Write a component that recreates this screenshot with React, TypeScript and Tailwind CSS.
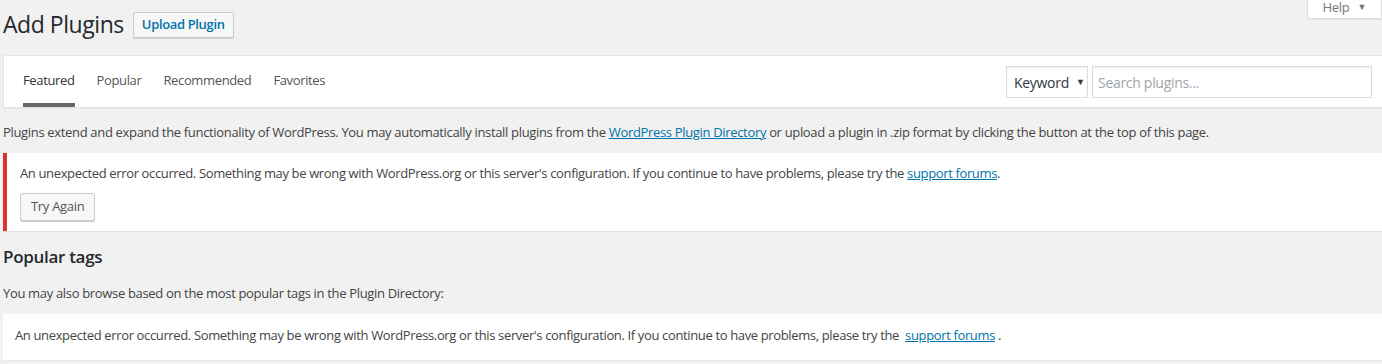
import React from "react";

const font = { fontFamily: '"Open Sans", "Noto Sans", sans-serif' };

export default function App() {
  return (
    <div className="min-h-[364px] w-[1382px] bg-[#f1f1f1] text-[#444] overflow-hidden" style={font}>
      <div className="relative">
        <div className="absolute right-0 top-0 flex h-[19px] w-[75px] items-start justify-center border border-t-0 border-[#ddd] bg-white shadow-[0_1px_1px_rgba(0,0,0,0.04)]">
          <span className="text-[13px] leading-[15px] tracking-[-0.3px] text-[#72777c]">Help</span>
          <span className="ml-[8px] text-[9px] leading-[14px] text-[#72777c]">▼</span>
        </div>
      </div>
      <div className="flex items-center gap-[9px] pl-[3px] pt-[10px]">
        <h1 className="text-[23px] leading-[29px] tracking-[-0.45px] text-[#23282d]">Add Plugins</h1>
        <button className="h-[26px] rounded-[2px] border border-[#ccc] bg-[#f7f7f7] px-[8px] text-[13px] font-semibold tracking-[-0.35px] text-[#0073aa] shadow-[0_1px_0_#ccc]">
          Upload Plugin
        </button>
      </div>
      <div className="ml-[3px] mt-[16px] flex h-[53px] items-stretch border border-r-0 border-[#e5e5e5] bg-white pl-[19px] pr-[10px] shadow-[0_1px_1px_rgba(0,0,0,0.04)]">
        <div className="flex items-stretch gap-[22px] text-[13px] tracking-[-0.36px]">
          <div className="flex flex-col justify-center border-b-4 border-[#666] pt-[2px] text-[#333]">Featured</div>
          <div className="flex flex-col justify-center pb-[2px] text-[#555]">Popular</div>
          <div className="flex flex-col justify-center pb-[2px] text-[#555]">Recommended</div>
          <div className="flex flex-col justify-center pb-[2px] text-[#555]">Favorites</div>
        </div>
        <div className="ml-auto flex items-center gap-[4px] pt-[1px]">
          <div className="flex h-[32px] w-[82px] items-center border border-[#ddd] bg-white pl-[7px] text-[14px] tracking-[-0.3px] text-[#32373c] shadow-[inset_0_1px_2px_rgba(0,0,0,0.07)]">
            <span>Keyword</span>
            <span className="ml-[7px] text-[9px]">▼</span>
          </div>
          <div className="flex h-[32px] w-[280px] items-center border border-[#ddd] bg-white pl-[5px] text-[14px] tracking-[-0.3px] text-[#a0a5aa] shadow-[inset_0_1px_2px_rgba(0,0,0,0.07)]">
            Search plugins...
          </div>
        </div>
      </div>
      <p className="mt-[15px] pl-[3px] text-[13px] leading-[19px] tracking-[-0.33px]">
        Plugins extend and expand the functionality of WordPress. You may automatically install plugins from the{" "}
        <a className="text-[#0073aa] underline">WordPress Plugin Directory</a> or upload a plugin in .zip format by clicking the button at the top of this page.
      </p>
      <div className="ml-[3px] mt-[11px] border-l-4 border-[#dc3232] bg-white pb-[10px] pl-[13px] pt-[11px] shadow-[0_1px_1px_rgba(0,0,0,0.08)]">
        <p className="text-[13px] leading-[19px] tracking-[-0.36px]">
          An unexpected error occurred. Something may be wrong with WordPress.org or this server's configuration. If you continue to have problems, please try the{" "}
          <a className="text-[#0073aa] underline">support forums</a>.
        </p>
        <button className="mt-[10px] h-[28px] rounded-[3px] border border-[#ccc] bg-[#f7f7f7] px-[10px] text-[13px] tracking-[-0.3px] text-[#555] shadow-[0_1px_0_#ccc]">
          Try Again
        </button>
      </div>
      <h2 className="mt-[13px] pl-[3px] text-[17px] font-semibold leading-[26px] tracking-[-0.3px] text-[#23282d]">Popular tags</h2>
      <p className="mt-[14px] pl-[3px] text-[13px] leading-[19px] tracking-[-0.33px]">You may also browse based on the most popular tags in the Plugin Directory:</p>
      <div className="ml-[3px] mt-[11px] h-[46px] bg-white pl-[12px] pt-[12px] shadow-[0_1px_1px_rgba(0,0,0,0.04)]">
        <p className="text-[13px] leading-[19px] tracking-[-0.36px]">
          An unexpected error occurred. Something may be wrong with WordPress.org or this server's configuration. If you continue to have problems, please try the{" "}
          <a className="ml-[3px] text-[#0073aa] underline">support forums</a> .
        </p>
      </div>
    </div>
  );
}
